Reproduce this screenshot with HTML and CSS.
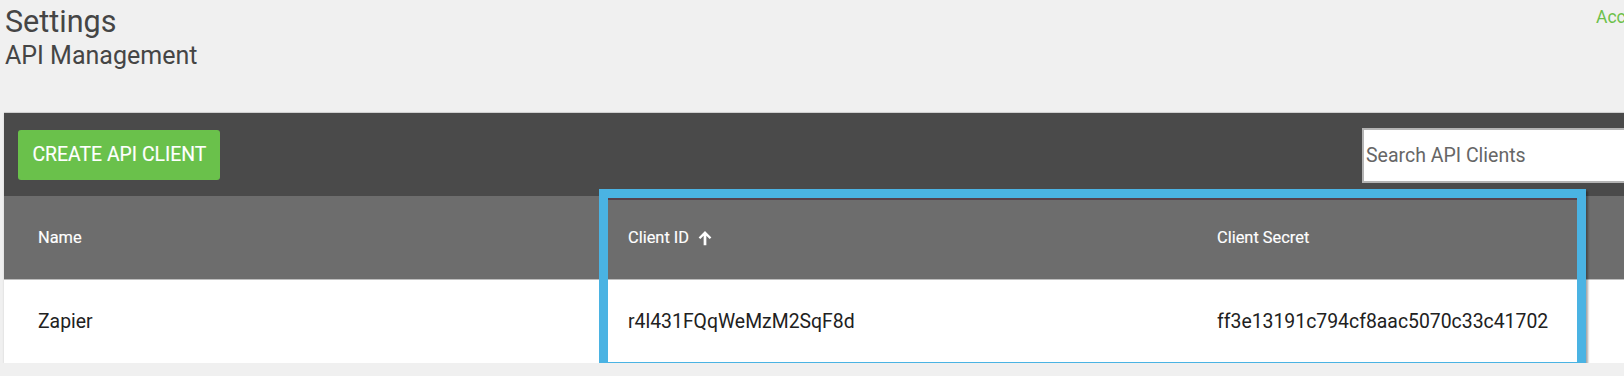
FILE: index.html
```html
<!DOCTYPE html>
<html lang="en">
<head>
<meta charset="utf-8">
<title>Settings - API Management</title>
<link rel="stylesheet" href="styles.css">
</head>
<body>
<div class="page">
  <header class="top">
    <div class="titles">
      <h1 class="title">Settings</h1>
      <h2 class="subtitle">API Management</h2>
    </div>
    <a class="account" href="#">Account</a>
  </header>

  <section class="panel">
    <div class="toolbar">
      <button class="create-btn" type="button">CREATE API CLIENT</button>
      <input class="search" type="text" placeholder="Search API Clients">
    </div>
    <div class="table">
      <div class="row head">
        <div class="cell">Name</div>
        <div class="cell">Client ID
          <svg class="sort-icon" viewBox="0 0 24 24" width="18" height="18" aria-hidden="true"><path d="M12 2.5L3.5 11.2l2.3 2.2 4.4-4.5V21.5h3.6V8.9l4.4 4.5 2.3-2.2z" fill="#ffffff"/></svg>
        </div>
        <div class="cell">Client Secret</div>
      </div>
      <div class="row body">
        <div class="cell">Zapier</div>
        <div class="cell">r4l431FQqWeMzM2SqF8d</div>
        <div class="cell">ff3e13191c794cf8aac5070c33c41702</div>
      </div>
    </div>
  </section>

  <div class="highlight"></div>
</div>
</body>
</html>
```
FILE: styles.css
```css
html, body {
  margin: 0;
  padding: 0;
  overflow: hidden;
}
body {
  background: #f0f0f0;
  font-family: Roboto, "Liberation Sans", Arial, sans-serif;
  color: #212121;
}
.page {
  position: relative;
  width: 1700px;
  padding-left: 4px;
}
.top {
  display: grid;
  grid-template-columns: 1592px auto;
  height: 112px;
}
.titles {
  padding-top: 4px;
  padding-left: 1px;
}
.title {
  margin: 0;
  font-size: 30.5px;
  line-height: 36px;
  font-weight: 400;
  color: #454545;
}
.subtitle {
  margin: 1px 0 0;
  font-size: 25px;
  line-height: 30px;
  font-weight: 400;
  color: #454545;
}
.account {
  padding-top: 7px;
  font-size: 17.5px;
  line-height: 20px;
  color: #6cc04a;
  text-decoration: none;
  white-space: nowrap;
}
.panel {
  width: 1696px;
  border-top: 1px solid #cfcfcf;
  box-shadow: 0 1px 2px rgba(0, 0, 0, 0.12);
}
.toolbar {
  display: flex;
  align-items: center;
  height: 83px;
  padding: 0 12px 0 14px;
  background: #4a4a4a;
}
.create-btn {
  height: 50px;
  padding: 0 14px 0 14.5px;
  border: none;
  border-radius: 3px;
  background: #6ac14b;
  color: #ffffff;
  font-family: Roboto, "Liberation Sans", Arial, sans-serif;
  font-size: 19.4px;
  font-weight: 400;
  -webkit-text-stroke: 0.15px #ffffff;
}
.search {
  margin-left: auto;
  margin-top: 2px;
  width: 326px;
  height: 55px;
  box-sizing: border-box;
  padding: 0 2px;
  border: 2px solid #b4b4b4;
  background: #ffffff;
  font-family: Roboto, "Liberation Sans", Arial, sans-serif;
  font-size: 19.5px;
  color: #444444;
  outline: none;
}
.search::placeholder {
  color: #666666;
  opacity: 1;
}
.row {
  display: grid;
  grid-template-columns: 590px 589px 1fr;
}
.cell {
  display: flex;
  align-items: center;
  padding-left: 34px;
}
.head {
  height: 83px;
  background: #6d6d6d;
  border-bottom: 1px solid #bdbdbd;
  color: #ffffff;
  font-size: 16.4px;
  font-weight: 400;
  -webkit-text-stroke: 0.15px #ffffff;
}
.sort-icon {
  margin-left: 7px;
}
.body {
  height: 83px;
  background: #ffffff;
  font-size: 19.4px;
  color: #212121;
}
.highlight {
  position: absolute;
  left: 599px;
  top: 189px;
  width: 987px;
  height: 182px;
  box-sizing: border-box;
  border: 9px solid #4ab3e3;
  box-shadow: 2px 2px 2px rgba(0, 0, 0, 0.35), inset 0 2px 0 rgba(70, 30, 50, 0.55);
  pointer-events: none;
}
```
